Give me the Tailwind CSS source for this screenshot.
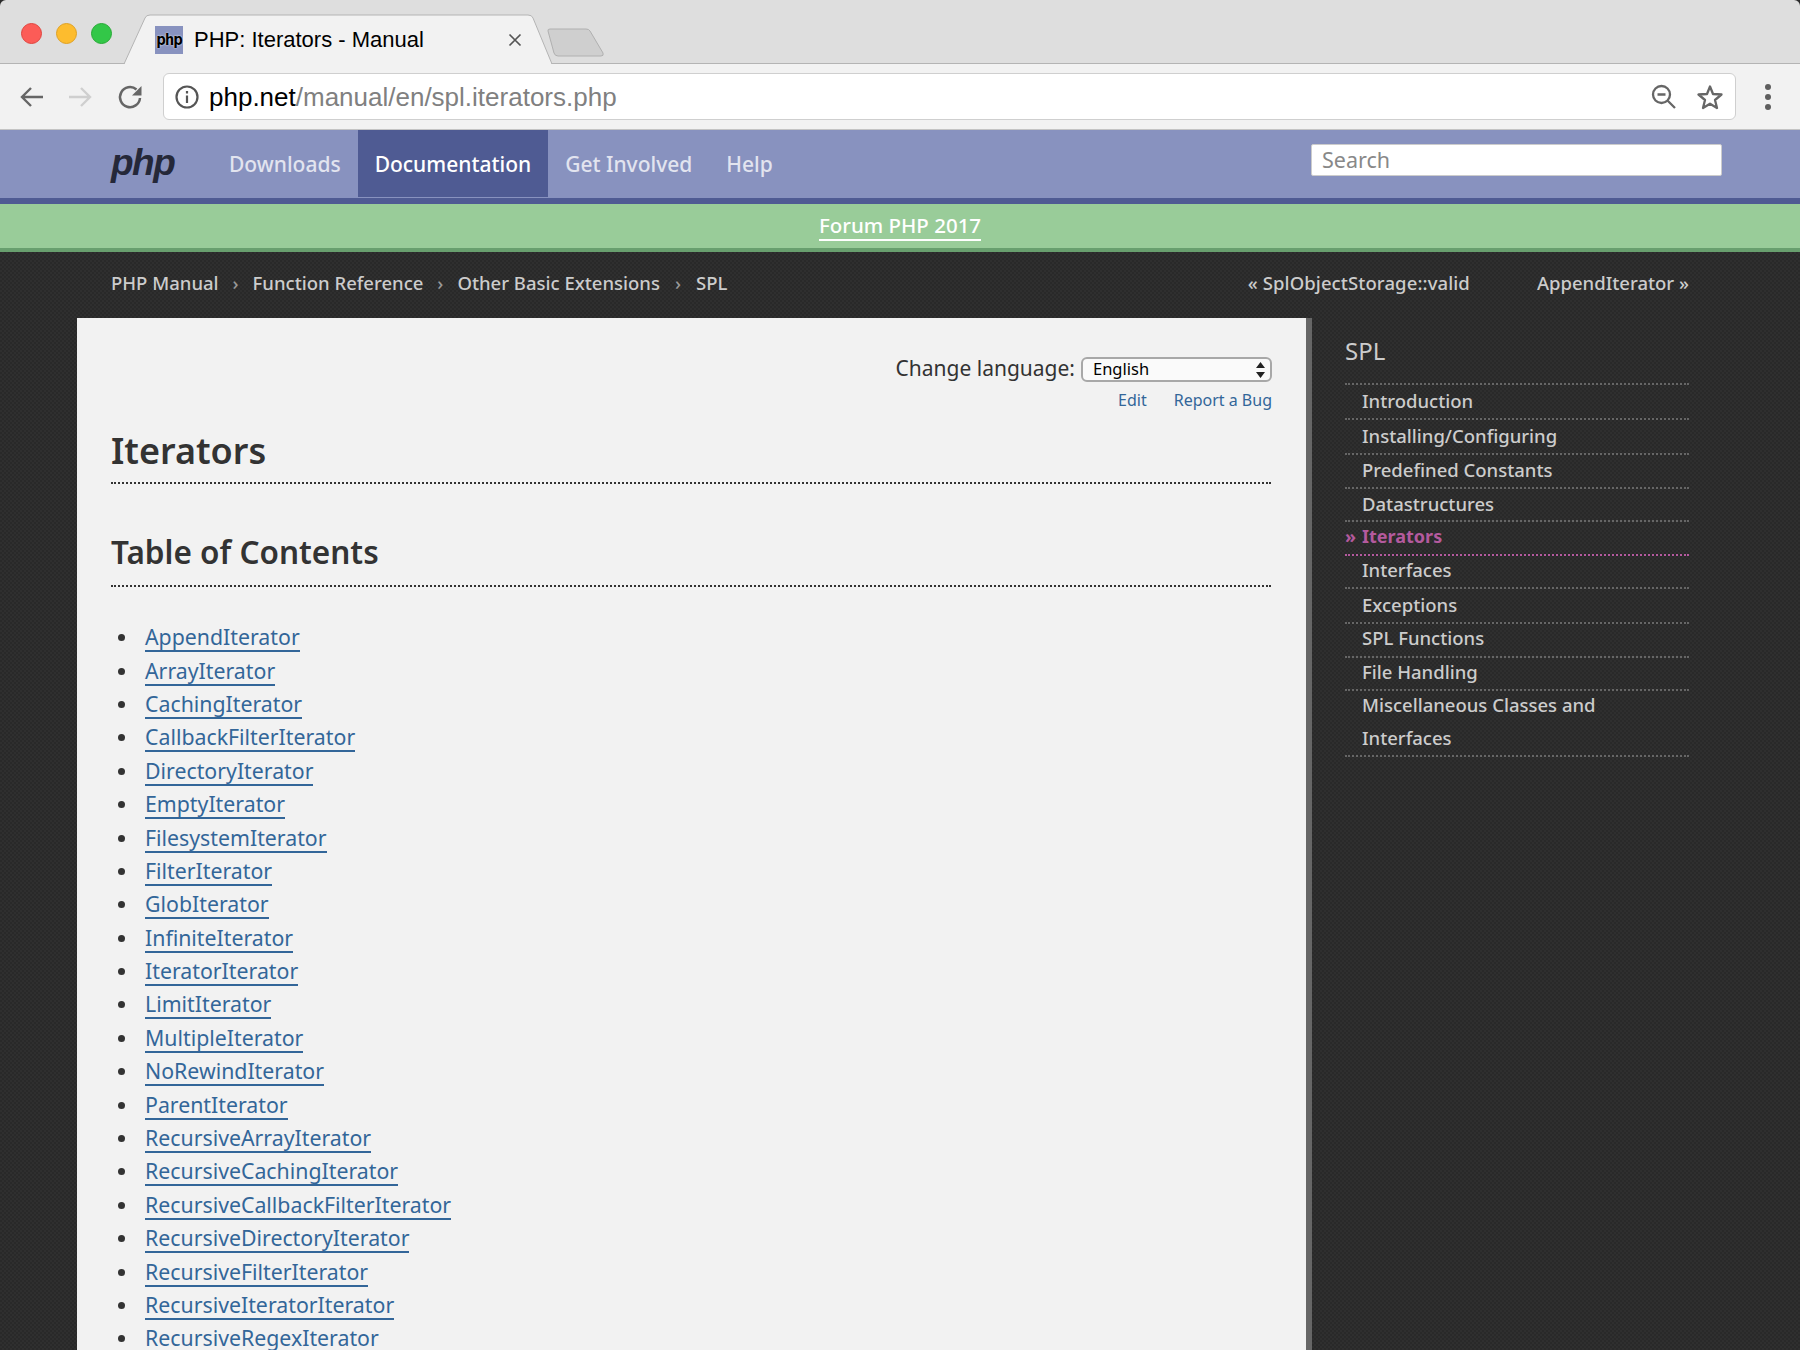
<!DOCTYPE html>
<html lang="en"><head><meta charset="utf-8"><title>PHP: Iterators - Manual</title>
<script src="https://cdn.jsdelivr.net/npm/@tailwindcss/browser@4"></script></head>
<body class="m-0 w-[1800px] h-[1350px] overflow-hidden bg-[#2b2b2b] font-['Noto_Sans',sans-serif]">
<!-- tab strip -->
<div class="h-16 bg-[#dedede] flex items-start border-b border-[#b4b4b4] rounded-t-md">
  <div class="flex gap-[14px] pl-[21px] pt-[23px] w-[124px] shrink-0">
    <span class="w-[21px] h-[21px] rounded-full bg-[#fc5c57] border border-[#e0443e]"></span>
    <span class="w-[21px] h-[21px] rounded-full bg-[#fdbc2e] border border-[#dfa123]"></span>
    <span class="w-[21px] h-[21px] rounded-full bg-[#33c748] border border-[#27aa35]"></span>
  </div>
  <div class="relative w-[428px] h-[64px] mt-0 shrink-0">
    <svg class="absolute inset-0" width="428" height="64" viewBox="0 0 428 64"><path d="M0 64 L21 18 Q22 15 26 15 L404 15 Q408 15 409 18 L428 64 Z" fill="#f2f2f2" stroke="#b4b4b4" stroke-width="1"/><rect x="1" y="63" width="426" height="2" fill="#f2f2f2"/></svg>
    <div class="relative flex items-center h-full pt-[15px] pl-[31px]">
      <span class="w-[28px] h-[28px] bg-[#8892bf] flex items-center justify-center text-[16px] leading-none font-bold text-black font-['DejaVu_Sans_Mono',monospace] tracking-[-1.2px] [text-shadow:0_0_2px_#fff]">php</span>
      <span class="ml-[11px] text-[22px] text-black font-['Liberation_Sans',sans-serif] whitespace-nowrap">PHP: Iterators - Manual</span>
      <svg class="absolute left-[384px] top-[33px]" width="14" height="14" viewBox="0 0 14 14"><path d="M1.5 1.5 L12.5 12.5 M12.5 1.5 L1.5 12.5" stroke="#555" stroke-width="1.7" fill="none"/></svg>
    </div>
  </div>
  <svg class="-ml-[6px] mt-[28px] shrink-0" width="60" height="30" viewBox="0 0 60 30"><path d="M2 3 Q1.5 1 4 1 L40 1 Q43 1 44 3 L57 25 Q58 28 55 28 L12 28 Q9 28 8 25 Z" fill="#cfcfcf" stroke="#b0b0b0"/></svg>
</div>
<!-- toolbar -->
<div class="h-[66px] bg-[#f2f2f2] flex items-center border-b border-[#c4c4c4]">
  <div class="w-[163px] shrink-0 flex items-center pl-[20px]">
    <svg width="24" height="24" viewBox="0 0 24 24" fill="none" stroke="#666" stroke-width="2.4"><path d="M23 12 H2 M11 3 L2 12 L11 21"/></svg>
    <svg class="ml-[24px]" width="24" height="24" viewBox="0 0 24 24" fill="none" stroke="#cfcfcf" stroke-width="2.4"><path d="M1 12 H22 M13 3 L22 12 L13 21"/></svg>
    <svg class="ml-[25px]" width="26" height="26" viewBox="0 0 26 26" fill="none" stroke="#666" stroke-width="2.5"><path d="M23 14 A10 10 0 1 1 19.5 5.5"/><path d="M24.5 2 V11.5 H15 Z" fill="#666" stroke="none"/></svg>
  </div>
  <div class="w-[1573px] h-[47px] bg-white border border-[#cfcfcf] rounded-md flex items-center pl-[10px] pr-[12px] shrink-0 font-['Liberation_Sans',sans-serif] text-[26px]">
    <svg width="26" height="26" viewBox="0 0 26 26" fill="none" stroke="#555" stroke-width="2.2"><circle cx="13" cy="13" r="10.5"/><path d="M13 11.5 V19 M13 7 V9.5"/></svg>
    <span class="ml-[9px] pt-[2px] text-black">php.net</span><span class="pt-[2px] text-[#808080]">/manual/en/spl.iterators.php</span>
    <div class="ml-auto flex items-center gap-[20px]">
      <svg width="26" height="26" viewBox="0 0 26 26" fill="none" stroke="#666" stroke-width="2.3"><circle cx="10.5" cy="10.5" r="8.5"/><path d="M6.5 10.5 H14.5 M16.5 16.5 L24 24"/></svg>
      <svg width="26" height="26" viewBox="0 0 26 26" fill="none" stroke="#666" stroke-width="2.3" stroke-linejoin="round"><path d="M13 2.5 L16 10 L24.5 10.5 L18 16 L20 24 L13 19.7 L6 24 L8 16 L1.5 10.5 L10 10 Z"/></svg>
    </div>
  </div>
  <div class="ml-[29px] flex flex-col gap-[4px]"><span class="w-[6px] h-[6px] rounded-full bg-[#5f5f5f]"></span><span class="w-[6px] h-[6px] rounded-full bg-[#5f5f5f]"></span><span class="w-[6px] h-[6px] rounded-full bg-[#5f5f5f]"></span></div>
</div>
<!-- php nav -->
<nav class="h-[74px] bg-[#8892bf] border-b-[6px] border-[#4f5b93] flex items-start pl-[111px] text-[21px]">
  <span class="w-[64px] mt-[13px] text-[37px] leading-[40px] font-bold italic text-[#252839] font-['Liberation_Sans',sans-serif] tracking-[-1.5px]">php</span>
  <div class="ml-[37px] flex h-[67px] items-center text-[#e2e4ef] font-medium">
    <a class="px-[17px] pt-[2px] h-full flex items-center">Downloads</a>
    <a class="px-[17px] pt-[2px] h-full flex items-center bg-[#4f5b93] text-white">Documentation</a>
    <a class="px-[17px] pt-[2px] h-full flex items-center">Get Involved</a>
    <a class="px-[17px] pt-[2px] h-full flex items-center">Help</a>
  </div>
  <input placeholder="Search" class="ml-auto mr-[78px] mt-[14px] w-[411px] h-[32px] bg-white rounded-[2px] px-[10px] text-[21.5px] text-[#777] placeholder:text-[#888] outline-none border border-[#ccc]">
</nav>
<!-- announcement -->
<div class="h-[48px] pt-[1px] bg-[#9c9] border-b-[4px] border-[#689f6e] flex items-center justify-center text-white text-[20.5px] font-medium"><a class="border-b-2 border-white leading-[27px]">Forum PHP 2017</a></div>
<!-- dark area -->
<div class="h-[1098px] bg-[repeating-conic-gradient(#2f2f2f_0_25%,#292929_0_50%)] bg-[length:4px_4px]">
  <div class="h-[62px] flex items-center pl-[111px] pr-[111px] text-[18.5px] text-[#ccc] font-medium">
    <span>PHP Manual</span><span class="mx-[14px] text-[#999]">›</span><span>Function Reference</span><span class="mx-[14px] text-[#999]">›</span><span>Other Basic Extensions</span><span class="mx-[15px] text-[#999]">›</span><span>SPL</span>
    <span class="ml-auto tracking-[0.1px]">« SplObjectStorage::valid</span><span class="ml-[67px]">AppendIterator »</span>
  </div>
  <div class="flex items-start pl-[77px] mt-[4px]">
    <main class="w-[1235px] h-[1032px] bg-[#f2f2f2] border-r-[6px] border-[#666] pl-[34px] pr-[35px] text-[#333] overflow-hidden shrink-0">
      <div class="flex justify-end items-center mt-[37px] -mr-px h-[28px] gap-[6px]">
        <span class="text-[21px]">Change language:</span>
        <div class="relative w-[191px] h-[25px]">
          <select class="appearance-none w-full h-full bg-[#fafafa] border-2 border-[#a8a8a8] rounded-[6px] pl-[10px] text-[16.5px] leading-[20px] text-black"><option>English</option></select>
          <svg class="absolute right-[6px] top-[5px]" width="11" height="16" viewBox="0 0 11 16"><path d="M5.5 0 L10 6 H1 Z M5.5 16 L10 10 H1 Z" fill="#222"/></svg>
        </div>
      </div>
      <div class="flex justify-end gap-[27px] -mr-px text-[16px] text-[#369] mt-[4px] h-[26px] leading-[26px]"><a>Edit</a><a>Report a Bug</a></div>
      <h1 class="mt-[13px] text-[36px] leading-[50px] font-semibold border-b-2 border-dotted border-[#333] pb-[6px] h-[58px]">Iterators</h1>
      <h2 class="mt-[46px] text-[31.5px] leading-[44px] font-semibold border-b-2 border-dotted border-[#333] pb-[6px] h-[57px]">Table of Contents</h2>
      <ul class="mt-[34px] pl-[7px] text-[21.3px] text-[#369]">
        <li class="h-[33.4px] flex items-center"><span class="w-[7px] h-[7px] mr-[20px] rounded-full bg-[#333]"></span><a class="border-b-2 border-[#369] leading-[27px]">AppendIterator</a></li>
        <li class="h-[33.4px] flex items-center"><span class="w-[7px] h-[7px] mr-[20px] rounded-full bg-[#333]"></span><a class="border-b-2 border-[#369] leading-[27px]">ArrayIterator</a></li>
        <li class="h-[33.4px] flex items-center"><span class="w-[7px] h-[7px] mr-[20px] rounded-full bg-[#333]"></span><a class="border-b-2 border-[#369] leading-[27px]">CachingIterator</a></li>
        <li class="h-[33.4px] flex items-center"><span class="w-[7px] h-[7px] mr-[20px] rounded-full bg-[#333]"></span><a class="border-b-2 border-[#369] leading-[27px]">CallbackFilterIterator</a></li>
        <li class="h-[33.4px] flex items-center"><span class="w-[7px] h-[7px] mr-[20px] rounded-full bg-[#333]"></span><a class="border-b-2 border-[#369] leading-[27px]">DirectoryIterator</a></li>
        <li class="h-[33.4px] flex items-center"><span class="w-[7px] h-[7px] mr-[20px] rounded-full bg-[#333]"></span><a class="border-b-2 border-[#369] leading-[27px]">EmptyIterator</a></li>
        <li class="h-[33.4px] flex items-center"><span class="w-[7px] h-[7px] mr-[20px] rounded-full bg-[#333]"></span><a class="border-b-2 border-[#369] leading-[27px]">FilesystemIterator</a></li>
        <li class="h-[33.4px] flex items-center"><span class="w-[7px] h-[7px] mr-[20px] rounded-full bg-[#333]"></span><a class="border-b-2 border-[#369] leading-[27px]">FilterIterator</a></li>
        <li class="h-[33.4px] flex items-center"><span class="w-[7px] h-[7px] mr-[20px] rounded-full bg-[#333]"></span><a class="border-b-2 border-[#369] leading-[27px]">GlobIterator</a></li>
        <li class="h-[33.4px] flex items-center"><span class="w-[7px] h-[7px] mr-[20px] rounded-full bg-[#333]"></span><a class="border-b-2 border-[#369] leading-[27px]">InfiniteIterator</a></li>
        <li class="h-[33.4px] flex items-center"><span class="w-[7px] h-[7px] mr-[20px] rounded-full bg-[#333]"></span><a class="border-b-2 border-[#369] leading-[27px]">IteratorIterator</a></li>
        <li class="h-[33.4px] flex items-center"><span class="w-[7px] h-[7px] mr-[20px] rounded-full bg-[#333]"></span><a class="border-b-2 border-[#369] leading-[27px]">LimitIterator</a></li>
        <li class="h-[33.4px] flex items-center"><span class="w-[7px] h-[7px] mr-[20px] rounded-full bg-[#333]"></span><a class="border-b-2 border-[#369] leading-[27px]">MultipleIterator</a></li>
        <li class="h-[33.4px] flex items-center"><span class="w-[7px] h-[7px] mr-[20px] rounded-full bg-[#333]"></span><a class="border-b-2 border-[#369] leading-[27px]">NoRewindIterator</a></li>
        <li class="h-[33.4px] flex items-center"><span class="w-[7px] h-[7px] mr-[20px] rounded-full bg-[#333]"></span><a class="border-b-2 border-[#369] leading-[27px]">ParentIterator</a></li>
        <li class="h-[33.4px] flex items-center"><span class="w-[7px] h-[7px] mr-[20px] rounded-full bg-[#333]"></span><a class="border-b-2 border-[#369] leading-[27px]">RecursiveArrayIterator</a></li>
        <li class="h-[33.4px] flex items-center"><span class="w-[7px] h-[7px] mr-[20px] rounded-full bg-[#333]"></span><a class="border-b-2 border-[#369] leading-[27px]">RecursiveCachingIterator</a></li>
        <li class="h-[33.4px] flex items-center"><span class="w-[7px] h-[7px] mr-[20px] rounded-full bg-[#333]"></span><a class="border-b-2 border-[#369] leading-[27px]">RecursiveCallbackFilterIterator</a></li>
        <li class="h-[33.4px] flex items-center"><span class="w-[7px] h-[7px] mr-[20px] rounded-full bg-[#333]"></span><a class="border-b-2 border-[#369] leading-[27px]">RecursiveDirectoryIterator</a></li>
        <li class="h-[33.4px] flex items-center"><span class="w-[7px] h-[7px] mr-[20px] rounded-full bg-[#333]"></span><a class="border-b-2 border-[#369] leading-[27px]">RecursiveFilterIterator</a></li>
        <li class="h-[33.4px] flex items-center"><span class="w-[7px] h-[7px] mr-[20px] rounded-full bg-[#333]"></span><a class="border-b-2 border-[#369] leading-[27px]">RecursiveIteratorIterator</a></li>
        <li class="h-[33.4px] flex items-center"><span class="w-[7px] h-[7px] mr-[20px] rounded-full bg-[#333]"></span><a class="border-b-2 border-[#369] leading-[27px]">RecursiveRegexIterator</a></li>
      </ul>
    </main>
    <aside class="ml-[33px] w-[344px] text-[#ccc] text-[18.5px] font-medium">
      <div class="h-[67px] border-b-2 border-dotted border-[#666] text-[24px] font-normal pt-[15px] leading-[36px]">SPL</div>
      <ul>
        <li class="h-[35px] pl-[17px] pb-[1px] flex items-center border-b-2 border-dotted border-[#666]">Introduction</li>
        <li class="h-[35px] pl-[17px] pb-[1px] flex items-center border-b-2 border-dotted border-[#666]">Installing/Configuring</li>
        <li class="h-[34px] pl-[17px] pb-[2px] flex items-center border-b-2 border-dotted border-[#666]">Predefined Constants</li>
        <li class="h-[33px] pl-[17px] pb-[2px] flex items-center border-b-2 border-dotted border-[#666]">Datastructures</li>
        <li class="h-[34px] pb-[3px] flex items-center border-b-2 border-dotted border-[#b45a9e] text-[#b45a9e] font-bold text-[18px]"><span class="w-[17px]">»</span>Iterators</li>
        <li class="h-[33px] pl-[17px] pb-[3px] flex items-center border-b-2 border-dotted border-[#666]">Interfaces</li>
        <li class="h-[35px] pl-[17px] pb-[2px] flex items-center border-b-2 border-dotted border-[#666]">Exceptions</li>
        <li class="h-[34px] pl-[17px] pb-[4px] flex items-center border-b-2 border-dotted border-[#666]">SPL Functions</li>
        <li class="h-[33px] pl-[17px] pb-[3px] flex items-center border-b-2 border-dotted border-[#666]">File Handling</li>
        <li class="h-[69px] pl-[17px] leading-[33px] border-b-2 border-dotted border-[#666]"><span class="block -mt-[3px]">Miscellaneous Classes and Interfaces</span></li>
      </ul>
    </aside>
  </div>
</div>
</body></html>
